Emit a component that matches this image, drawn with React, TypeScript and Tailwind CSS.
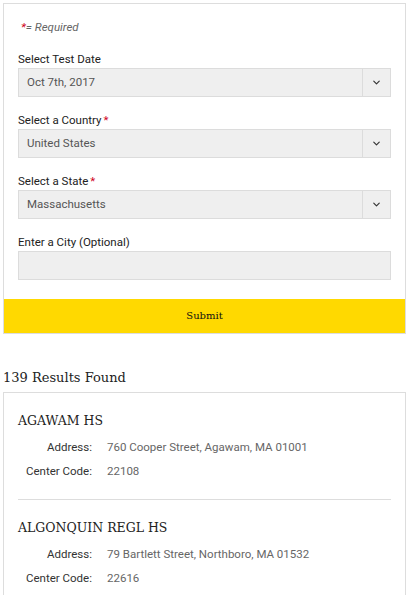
import { ChevronDown } from "lucide-react";

const SLAB = "font-['DejaVu_Serif',serif]";

type Center = { name: string; address: string; code: string };

const CENTERS: Center[] = [
  { name: "AGAWAM HS", address: "760 Cooper Street, Agawam, MA 01001", code: "22108" },
  { name: "ALGONQUIN REGL HS", address: "79 Bartlett Street, Northboro, MA 01532", code: "22616" },
];

function Field({
  label,
  required,
  value,
  select,
}: {
  label: string;
  required?: boolean;
  value?: string;
  select?: boolean;
}) {
  return (
    <div>
      <div className="text-[11.5px] leading-[16px] text-[#222]">
        {label}
        {required && <span className="ml-[2px] text-[#d0021b]">*</span>}
      </div>
      <div className="mt-[1px] flex h-[29px] border border-[#dcdcdc] bg-[#efefef]">
        <div className="flex-1 px-[8px] text-[11.5px] leading-[26px] text-[#555]">{value}</div>
        {select && (
          <div className="flex w-[28px] items-center justify-center border-l border-[#dcdcdc]">
            <ChevronDown size={11} strokeWidth={2.5} className="text-[#333]" />
          </div>
        )}
      </div>
    </div>
  );
}

export default function App() {
  return (
    <div className="min-h-[595px] bg-white px-[3px] pt-[3px] font-['Roboto',sans-serif]">
      <div className="border border-[#ddd] bg-white">
        <div className="px-[14px] pt-[15px] pb-[19px]">
          <p className="ml-[3px] text-[11.5px] leading-[16px] italic text-[#666]">
            <span className="text-[#d0021b]">*</span>= Required
          </p>
          <div className="mt-[16px] flex flex-col gap-[15px]">
            <Field label="Select Test Date" value="Oct 7th, 2017" select />
            <Field label="Select a Country" required value="United States" select />
            <Field label="Select a State" required value="Massachusetts" select />
            <Field label="Enter a City (Optional)" />
          </div>
        </div>
        <button className={`block h-[34px] w-full bg-[#ffd900] text-[10px] leading-[32px] text-[#111] ${SLAB}`}>
          Submit
        </button>
      </div>

      <h2 className={`mt-[34px] text-[13px] leading-[20px] text-[#222] ${SLAB}`}>139 Results Found</h2>

      <div className="mt-[4px] border border-[#ddd] px-[14px] pt-[18px]">
        {CENTERS.map((c, i) => (
          <div key={c.code} className={i > 0 ? "border-t border-[#ddd] pt-[18px]" : ""}>
            <h3 className={`text-[12.5px] leading-[20px] text-[#222] ${SLAB}`}>{c.name}</h3>
            <div className="mt-[8px] grid grid-cols-[74px_1fr] gap-x-[15px] gap-y-[8px] pb-[20px] text-[11.5px] leading-[16px]">
              <div className="text-right text-[#333]">Address:</div>
              <div className="text-[#666]">{c.address}</div>
              <div className="text-right text-[#333]">Center Code:</div>
              <div className="text-[#666]">{c.code}</div>
            </div>
          </div>
        ))}
      </div>
    </div>
  );
}
